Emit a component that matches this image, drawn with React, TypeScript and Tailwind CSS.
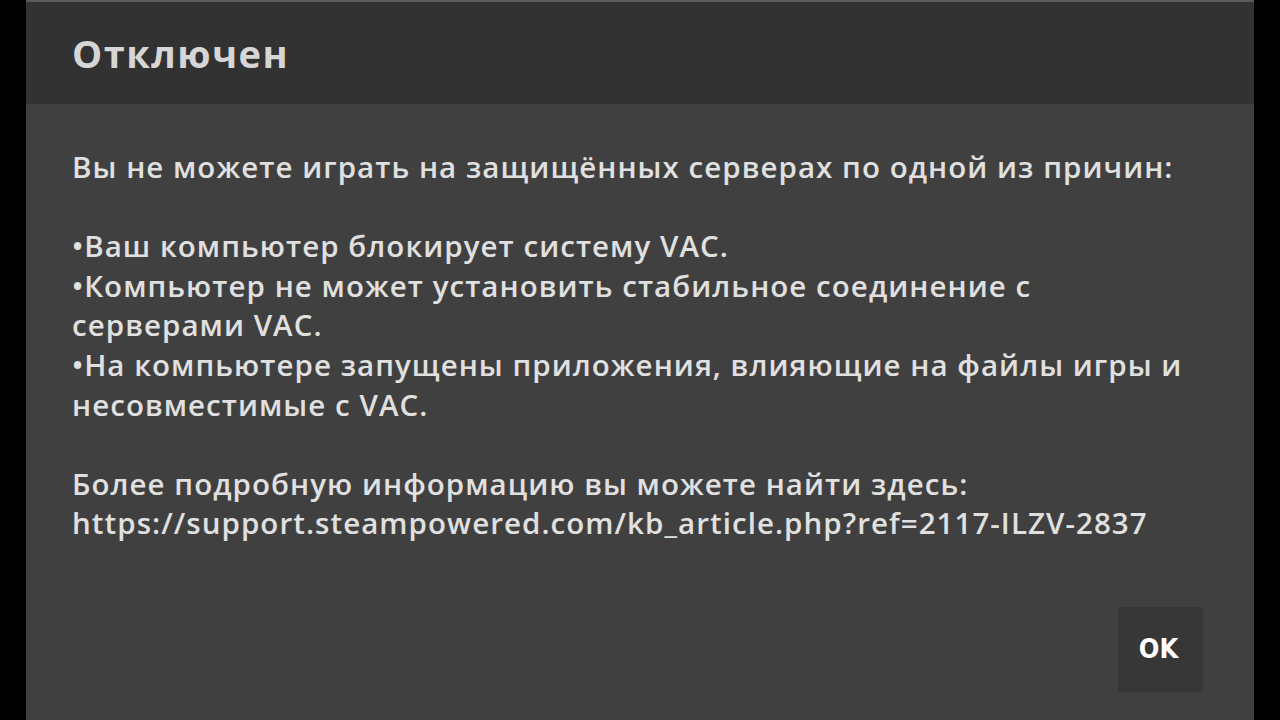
import React from 'react';

const lines = [
  'Вы не можете играть на защищённых серверах по одной из причин:',
  '',
  '•Ваш компьютер блокирует систему VAC.',
  '•Компьютер не может установить стабильное соединение с',
  'серверами VAC.',
  '•На компьютере запущены приложения, влияющие на файлы игры и',
  'несовместимые с VAC.',
  '',
  'Более подробную информацию вы можете найти здесь:',
  'https://support.steampowered.com/kb_article.php?ref=2117-ILZV-2837',
];

export default function App() {
  return (
    <div className="w-[1280px] h-[720px] bg-black flex justify-center overflow-hidden">
      <div className="w-[1228px] h-full flex flex-col border-t-2 border-[#5a5a5a]">
        {/* Header */}
        <div className="h-[102px] bg-[#323232] flex items-center pl-[46px] pr-12 shrink-0">
          <h1 className="text-[38px] font-bold text-[#d6d6d6] tracking-[1.5px]" style={{ fontFamily: '"Open Sans", sans-serif' }}>
            Отключен
          </h1>
        </div>
        {/* Body */}
        <div className="flex-1 bg-[#404040] flex flex-col pl-[46px] pr-12 pt-[43px] pb-7">
          <div className="text-[29.5px] leading-[39.6px] font-semibold tracking-[1.05px] text-[#e0e0e0]" style={{ fontFamily: '"Open Sans", sans-serif' }}>
            {lines.map((l, i) => (
              <div key={i} className="h-[39.6px] whitespace-nowrap">{l}</div>
            ))}
          </div>
          <div className="mt-auto flex justify-end pr-[3px]">
            <button className="w-[85px] h-[85px] bg-[#373737] flex items-center justify-center pr-1 text-[27px] font-bold text-white" style={{ fontFamily: '"DejaVu Sans Condensed", sans-serif' }}>
              OK
            </button>
          </div>
        </div>
      </div>
    </div>
  );
}
